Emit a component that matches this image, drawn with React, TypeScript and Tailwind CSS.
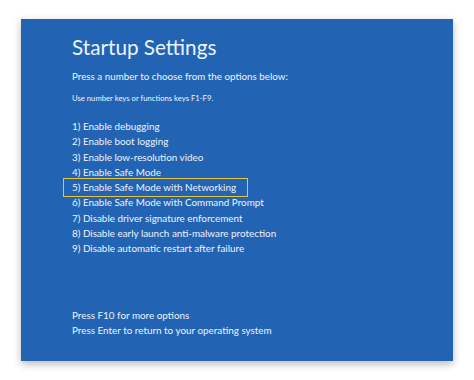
const options = [
  '1) Enable debugging',
  '2) Enable boot logging',
  '3) Enable low-resolution video',
  '4) Enable Safe Mode',
  '5) Enable Safe Mode with Networking',
  '6) Enable Safe Mode with Command Prompt',
  '7) Disable driver signature enforcement',
  '8) Disable early launch anti-malware protection',
  '9) Disable automatic restart after failure',
]

export default function App() {
  return (
    <div className="w-[474px] h-[380px] bg-white pt-[19px] pl-[21px]" style={{ fontFamily: 'Lato, "Open Sans", sans-serif' }}>
      <div className="w-[432px] h-[342px] bg-[#2264b3] shadow-[0_3px_8px_rgba(0,0,0,0.28)] pl-[51px] pt-[14px] text-[#eef3fb] flex flex-col">
        <h1 className="text-[20.7px] leading-[28px]">Startup Settings</h1>
        <p className="mt-[7px] text-[9.8px] leading-[16px]">Press a number to choose from the options below:</p>
        <p className="mt-[8px] text-[7.7px] leading-[12px]">Use number keys or functions keys F1-F9.</p>
        <ul className="mt-[15px] text-[9.9px] leading-[15.25px]">
          {options.map((o, i) => (
            <li key={o} className="relative">
              {i === 4 && (
                <span className="absolute -left-[9px] -top-[2px] w-[185px] h-[19px] border-[1.5px] border-[#e8c43a]" />
              )}
              {o}
            </li>
          ))}
        </ul>
        <div className="mt-[52px] text-[9.9px] leading-[15px]">
          <p>Press F10 for more options</p>
          <p>Press Enter to return to your operating system</p>
        </div>
      </div>
    </div>
  )
}
